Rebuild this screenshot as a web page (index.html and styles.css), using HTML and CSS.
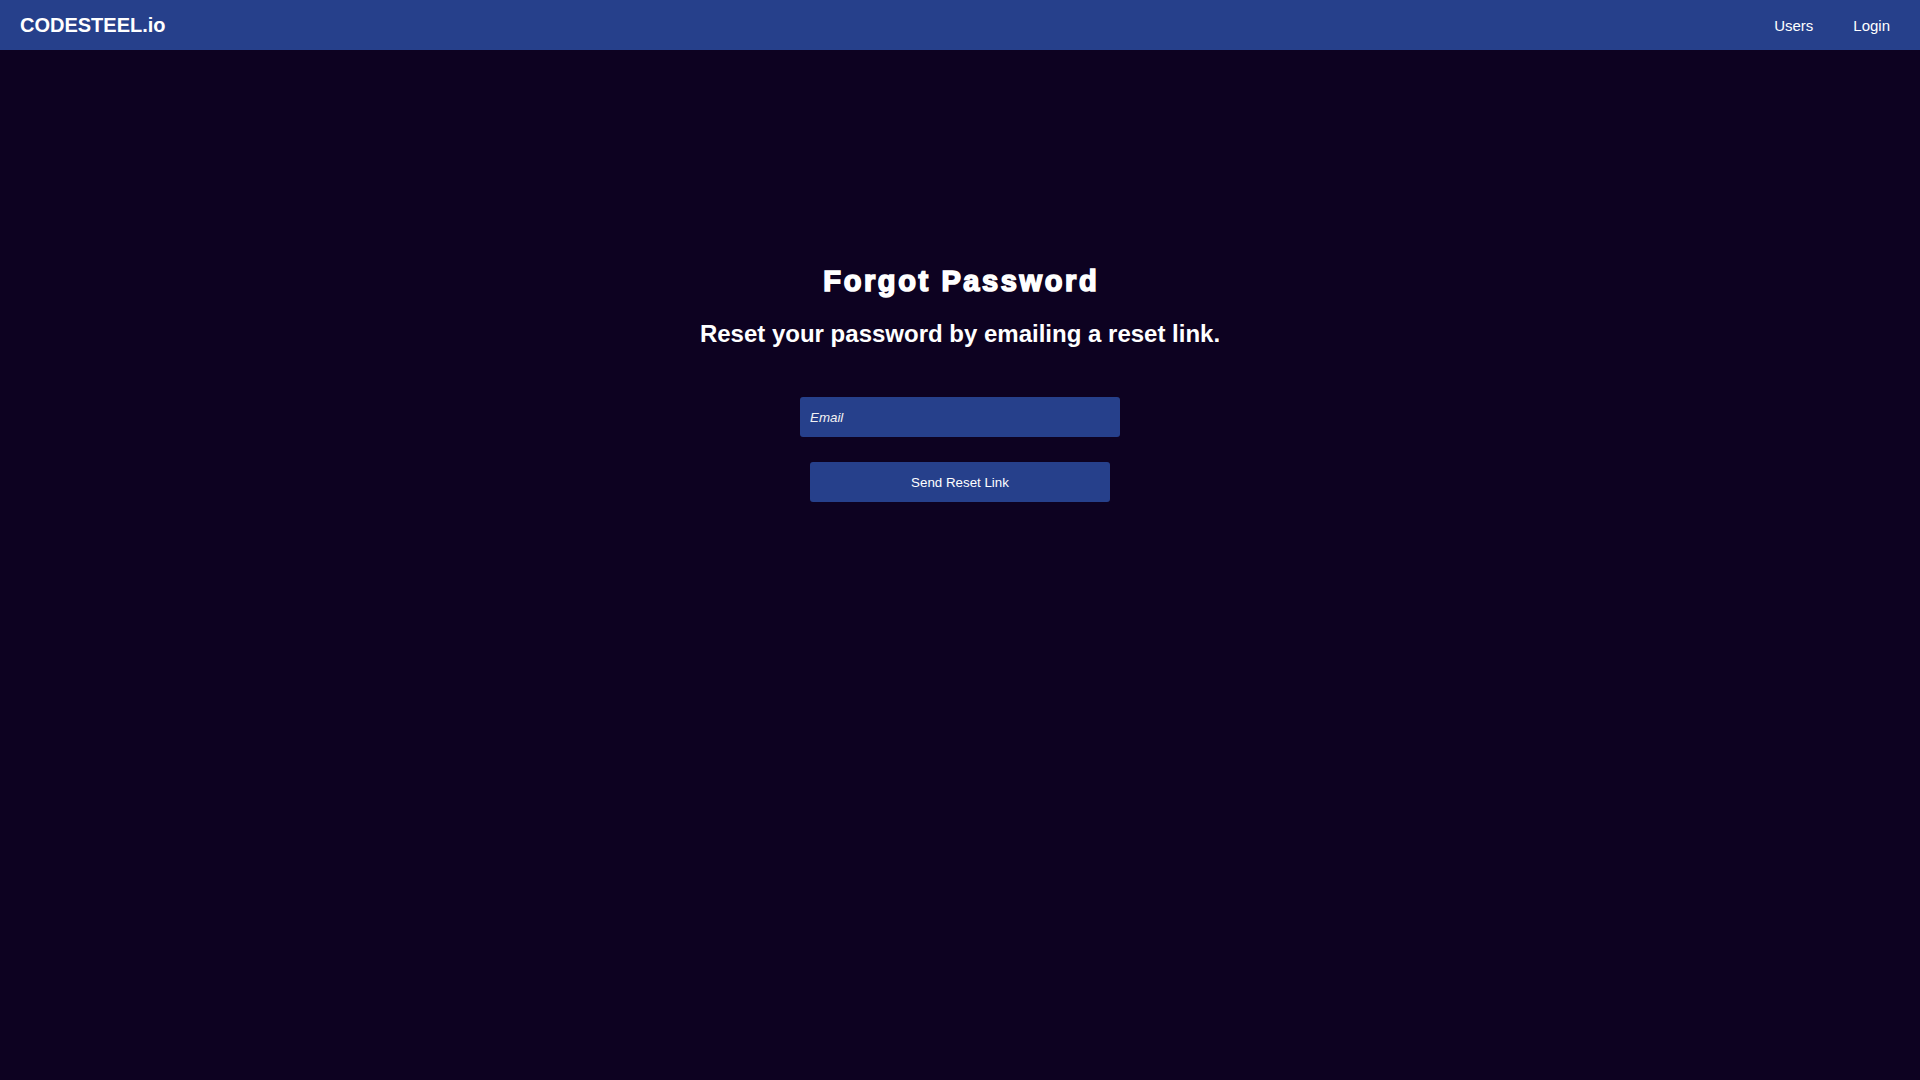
FILE: index.html
```html
<!DOCTYPE html>
<html lang="en">
<head>
<meta charset="utf-8">
<title>Forgot Password - CODESTEEL.io</title>
<link rel="stylesheet" href="styles.css">
</head>
<body>
<header class="topbar">
  <a class="brand" href="#">CODESTEEL.io</a>
  <nav class="nav">
    <a class="nav-link" href="#">Users</a>
    <a class="nav-link" href="#">Login</a>
  </nav>
</header>
<main class="page">
  <h1 class="title">Forgot Password</h1>
  <h2 class="subtitle">Reset your password by emailing a reset link.</h2>
  <form class="reset-form">
    <input class="email-input" type="email" placeholder="Email">
    <button class="submit-btn" type="button">Send Reset Link</button>
  </form>
</main>
</body>
</html>
```
FILE: styles.css
```css
* { box-sizing: border-box; }
html, body { margin: 0; padding: 0; }
body {
  background: #0d0221;
  color: #ffffff;
  font-family: "Liberation Sans", Arial, sans-serif;
  min-height: 100vh;
}
.topbar {
  height: 50px;
  background: #26408b;
  display: flex;
  align-items: center;
  justify-content: space-between;
  padding: 0 30px 0 20px;
}
.brand {
  color: #ffffff;
  text-decoration: none;
  font-weight: 700;
  font-size: 20px;
  line-height: 22px;
}
.nav {
  display: flex;
  gap: 40px;
  padding-top: 1px;
}
.nav-link {
  color: #ffffff;
  text-decoration: none;
  font-size: 15px;
  line-height: 17px;
}
.page {
  display: flex;
  flex-direction: column;
  align-items: center;
  padding-top: 214px;
}
.title {
  margin: 0;
  font-size: 29px;
  line-height: 34px;
  font-weight: 700;
  letter-spacing: 2.6px;
  -webkit-text-stroke: 1.6px #ffffff;
  padding-left: 2.6px;
}
.subtitle {
  margin: 22px 0 0;
  font-size: 24px;
  line-height: 28px;
  font-weight: 700;
}
.reset-form {
  display: flex;
  flex-direction: column;
  align-items: center;
  margin-top: 49px;
}
.email-input {
  width: 320px;
  height: 40px;
  border: none;
  border-radius: 3px;
  background: #26408b;
  color: #ffffff;
  padding: 0 10px;
  font-family: "Liberation Sans", Arial, sans-serif;
  font-size: 13.33px;
  font-style: italic;
  outline: none;
}
.email-input::placeholder {
  color: #f2f2f2;
  font-style: italic;
}
.submit-btn {
  margin-top: 25px;
  width: 300px;
  height: 40px;
  border: none;
  border-radius: 3px;
  background: #26408b;
  color: #ffffff;
  font-family: "Liberation Sans", Arial, sans-serif;
  font-size: 13.33px;
  cursor: pointer;
}
```
